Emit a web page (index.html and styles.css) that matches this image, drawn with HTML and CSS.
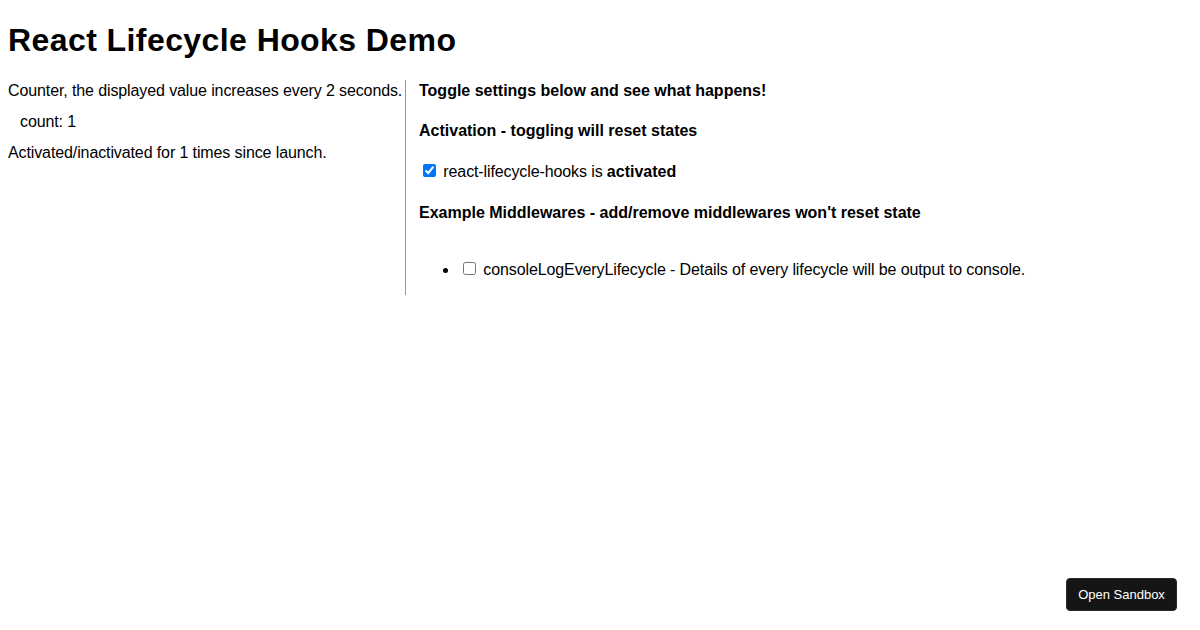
FILE: index.html
```html
<!DOCTYPE html>
<html>
<head>
<meta charset="utf-8">
<title>React Lifecycle Hooks Demo</title>
<link rel="stylesheet" href="styles.css">
</head>
<body>
<h1 class="title">React Lifecycle Hooks Demo</h1>
<div class="layout">
  <div class="left">
    <div class="line">Counter, the displayed value increases every 2 seconds.</div>
    <div class="line count">count: 1</div>
    <div class="line">Activated/inactivated for 1 times since launch.</div>
  </div>
  <div class="right">
    <div class="head first">Toggle settings below and see what happens!</div>
    <div class="head">Activation - toggling will reset states</div>
    <div class="row"><label><input type="checkbox" checked> react-lifecycle-hooks is <b>activated</b></label></div>
    <div class="head mw">Example Middlewares - add/remove middlewares won't reset state</div>
    <ul class="list">
      <li><label><input type="checkbox"> consoleLogEveryLifecycle - Details of every lifecycle will be output to console.</label></li>
    </ul>
  </div>
</div>
<button class="sandbox">Open Sandbox</button>
</body>
</html>
```
FILE: styles.css
```css
html, body {
  background: #fff;
  color: #000;
}
body {
  margin: 0 8px 8px;
  font-family: "Liberation Sans", Arial, sans-serif;
  font-size: 16px;
  letter-spacing: -0.11px;
}
.title {
  font-size: 32px;
  font-weight: bold;
  letter-spacing: 0.42px;
  margin: 22.4px 0 20.7px;
}
.layout {
  display: flex;
  align-items: stretch;
}
.left {
  width: 397px;
  padding-top: 2px;
  white-space: nowrap;
  border-right: 1px solid #999;
}
.line {
  margin-bottom: 12.6px;
}
.count {
  padding-left: 12px;
  margin-bottom: 13.4px;
}
.right {
  flex: 1;
  padding: 2px 0 0 13px;
}
.head {
  font-weight: bold;
  letter-spacing: 0;
  margin-top: 21.6px;
}
.head.first {
  margin-top: 0;
}
.head.mw {
  margin-top: 22.6px;
}
.row {
  margin-top: 21.6px;
}
.row b {
  letter-spacing: 0;
}
.row input, .list input {
  margin: 3px 3px 3px 4px;
  vertical-align: baseline;
}
.list {
  margin: 21.28px 0 16px;
  padding: 16px 0 0 40px;
}
.sandbox {
  position: fixed;
  right: 23px;
  bottom: 19px;
  width: 111px;
  height: 33px;
  background: #151515;
  color: #fff;
  border: 1px solid #2a2a2a;
  border-radius: 4px;
  font-family: "Liberation Sans", Arial, sans-serif;
  font-size: 13px;
  letter-spacing: 0;
  padding: 0;
}
```
